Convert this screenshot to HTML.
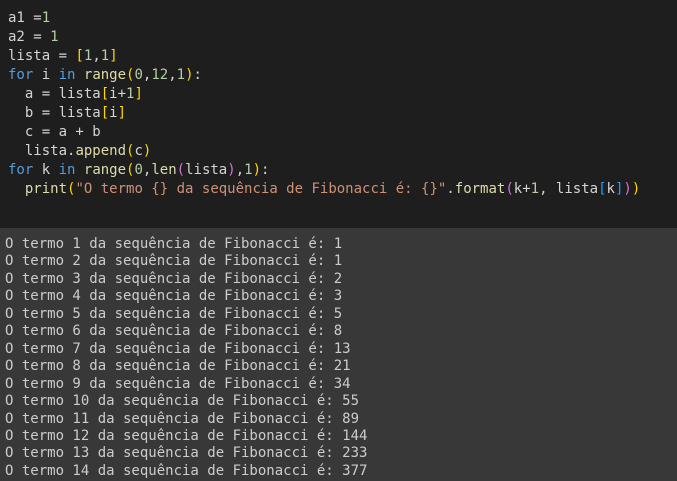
<!DOCTYPE html>
<html><head><meta charset="utf-8"><style>
html,body{margin:0;padding:0;width:677px;height:481px;overflow:hidden;background:#1e1e1e}
.code{position:absolute;left:0;top:0;width:677px;height:228px;background:#1e1e1e}
pre{margin:0;font-family:"DejaVu Sans Mono","Liberation Mono",monospace;font-size:14px;white-space:pre}
.code pre{position:absolute;left:8px;top:9px;line-height:19px;color:#d4d4d4}
.out{position:absolute;left:0;top:228px;width:677px;height:253px;background:#383838}
.out pre{position:absolute;left:5px;top:8px;line-height:17.45px;color:#cccccc}
.k{color:#c586c0}.kb{color:#569cd6}.n{color:#b5cea8}.s{color:#ce9178}.f{color:#dcdcaa}
.y{color:#ffd700}.p{color:#da70d6}.b{color:#179fff}
</style></head><body>
<div class="code"><pre>a1 =<span class="n">1</span>
a2 = <span class="n">1</span>
lista = <span class="y">[</span><span class="n">1</span>,<span class="n">1</span><span class="y">]</span>
<span class="kb">for</span> i <span class="kb">in</span> <span class="f">range</span><span class="y">(</span><span class="n">0</span>,<span class="n">12</span>,<span class="n">1</span><span class="y">)</span>:
  a = lista<span class="y">[</span>i+<span class="n">1</span><span class="y">]</span>
  b = lista<span class="y">[</span>i<span class="y">]</span>
  c = a + b
  lista.<span class="f">append</span><span class="y">(</span>c<span class="y">)</span>
<span class="kb">for</span> k <span class="kb">in</span> <span class="f">range</span><span class="y">(</span><span class="n">0</span>,<span class="f">len</span><span class="p">(</span>lista<span class="p">)</span>,<span class="n">1</span><span class="y">)</span>:
  <span class="f">print</span><span class="y">(</span><span class="s">"O termo {} da sequência de Fibonacci é: {}"</span>.<span class="f">format</span><span class="p">(</span>k+<span class="n">1</span>, lista<span class="b">[</span>k<span class="b">]</span><span class="p">)</span><span class="y">)</span></pre></div>
<div class="out"><pre>O termo 1 da sequência de Fibonacci é: 1
O termo 2 da sequência de Fibonacci é: 1
O termo 3 da sequência de Fibonacci é: 2
O termo 4 da sequência de Fibonacci é: 3
O termo 5 da sequência de Fibonacci é: 5
O termo 6 da sequência de Fibonacci é: 8
O termo 7 da sequência de Fibonacci é: 13
O termo 8 da sequência de Fibonacci é: 21
O termo 9 da sequência de Fibonacci é: 34
O termo 10 da sequência de Fibonacci é: 55
O termo 11 da sequência de Fibonacci é: 89
O termo 12 da sequência de Fibonacci é: 144
O termo 13 da sequência de Fibonacci é: 233
O termo 14 da sequência de Fibonacci é: 377</pre></div>
</body></html>
